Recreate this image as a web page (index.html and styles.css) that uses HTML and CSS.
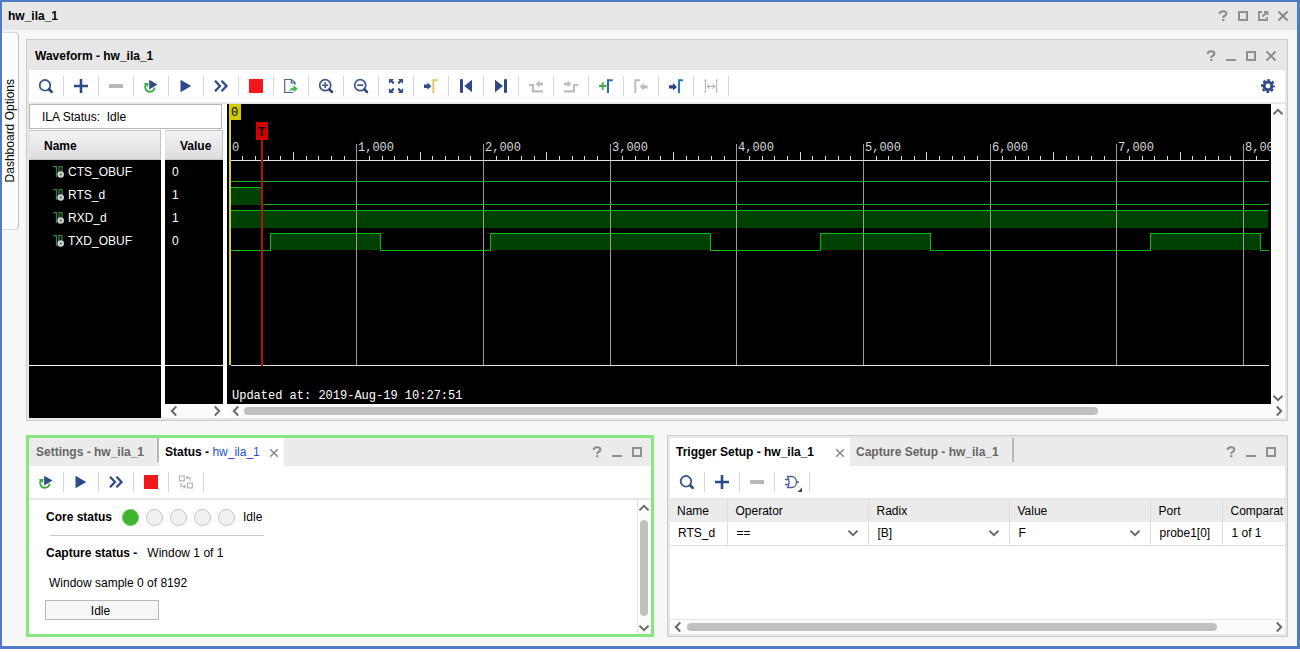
FILE: index.html
```html
<!DOCTYPE html>
<html lang="en">
<head>
<meta charset="utf-8">
<title>hw_ila_1</title>
<link rel="stylesheet" href="styles.css">
</head>
<body>
<svg class="sprite" aria-hidden="true">
  <symbol id="search" viewBox="0 0 16 16"><circle cx="7" cy="7.3" r="5.3" fill="none" stroke="#3f5a8e" stroke-width="1.9"/><path d="M11.3 11.5l2.4 2.4" stroke="#2f4779" stroke-width="2.6" stroke-linecap="round"/></symbol>
  <symbol id="plus" viewBox="0 0 16 16"><path d="M8 1v14M1 8h14" stroke="#2d4a86" stroke-width="2.6"/></symbol>
  <symbol id="minus" viewBox="0 0 16 16"><path d="M1 8h14" stroke="#b8b8b8" stroke-width="4"/></symbol>
  <symbol id="rerun" viewBox="0 0 16 16"><path d="M6.200 1.800L14.500 6.500 6.200 11.400z" fill="#304a84"/><path d="M2.600 6C1.200 9.800 3 13.700 6.600 13.700c2.800 0 4.800-1.700 4.800-4.200" fill="none" stroke="#3fae49" stroke-width="1.900"/><path d="M.8 5.300l4.800-.6-.6 4.600z" fill="#3fae49"/></symbol>
  <symbol id="play" viewBox="0 0 16 16"><path d="M2.500 1.700L13.300 8 2.500 14.300z" fill="#2d4a8c"/></symbol>
  <symbol id="forward" viewBox="0 0 16 16"><path d="M2 2.700L7 8l-5 5.300M8.500 2.700l5 5.300-5 5.300" fill="none" stroke="#2f4a88" stroke-width="2.300"/></symbol>
  <symbol id="stop" viewBox="0 0 16 16"><path d="M1 1h14v14H1z" fill="#f0181c"/></symbol>
  <symbol id="help" viewBox="0 0 12 12"><path d="M2.600 3.900C2.700 2.100 4.200 1.300 6 1.300s3.400.9 3.400 2.400C9.400 5.600 6.200 5.700 6.200 8" fill="none" stroke="#8a8a8a" stroke-width="2"/><path d="M5.100 9.100h2.200v2H5.100z" fill="#8a8a8a"/></symbol>
  <symbol id="minimize" viewBox="0 0 12 12"><path d="M1 10h10" stroke="#909090" stroke-width="2"/></symbol>
  <symbol id="maximize" viewBox="0 0 12 12"><path d="M2 2h8v8H2z" fill="none" stroke="#909090" stroke-width="2"/></symbol>
  <symbol id="popout" viewBox="0 0 12 12"><path d="M5 2H2v8h8V7M5.500 6.500L10 2M7 1.800h3.500v3.300" fill="none" stroke="#8f8f8f" stroke-width="1.800"/></symbol>
  <symbol id="close" viewBox="0 0 12 12"><path d="M1.500 1.500l9 9M10.500 1.500l-9 9" stroke="#888" stroke-width="1.800"/></symbol>
  <symbol id="up" viewBox="0 0 12 12"><path d="M1.500 8.200L6 3.800l4.500 4.400" fill="none" stroke="#6c6c6c" stroke-width="2"/></symbol>
  <symbol id="down" viewBox="0 0 12 12"><path d="M1.500 3.800L6 8.200l4.500-4.400" fill="none" stroke="#6c6c6c" stroke-width="2"/></symbol>
  <symbol id="left" viewBox="0 0 12 12"><path d="M8.200 1.500L3.800 6l4.400 4.500" fill="none" stroke="#6c6c6c" stroke-width="2"/></symbol>
  <symbol id="right" viewBox="0 0 12 12"><path d="M3.800 1.500L8.200 6l-4.400 4.500" fill="none" stroke="#6c6c6c" stroke-width="2"/></symbol>
  <symbol id="signal" viewBox="0 0 12 14"><path d="M0 1.700h3.500V12M6 8V1.700h3V7" fill="none" stroke="#348049" stroke-width="1.300"/><circle cx="7.700" cy="9.500" r="3.300" fill="#c9cfca"/><circle cx="7.700" cy="9.500" r="1" fill="#4d6553"/></symbol>
</svg>

<div class="app">
  <header class="bar titlebar">
    <h1 class="title">hw_ila_1</h1>
    <div class="controls">
      <button aria-label="Help"><svg><use href="#help"/></svg></button>
      <button aria-label="Maximize"><svg><use href="#maximize"/></svg></button>
      <button aria-label="Float"><svg><use href="#popout"/></svg></button>
      <button aria-label="Close"><svg><use href="#close"/></svg></button>
    </div>
  </header>

  <div class="body">
    <aside class="side"><button class="side-tab">Dashboard Options</button></aside>
    <main class="main">

      <section class="panel">
        <header class="bar">
          <h2 class="title">Waveform - hw_ila_1</h2>
          <div class="controls">
            <button aria-label="Help"><svg><use href="#help"/></svg></button>
            <button aria-label="Minimize"><svg><use href="#minimize"/></svg></button>
            <button aria-label="Maximize"><svg><use href="#maximize"/></svg></button>
            <button aria-label="Close"><svg><use href="#close"/></svg></button>
          </div>
        </header>
        <div class="toolbar">
          <button aria-label="Search"><svg><use href="#search"/></svg></button>
          <button aria-label="Add"><svg><use href="#plus"/></svg></button>
          <button aria-label="Remove" disabled><svg><use href="#minus"/></svg></button>
          <button aria-label="Auto re-trigger"><svg><use href="#rerun"/></svg></button>
          <button aria-label="Run trigger"><svg><use href="#play"/></svg></button>
          <button aria-label="Run immediate"><svg><use href="#forward"/></svg></button>
          <button aria-label="Stop"><svg><use href="#stop"/></svg></button>
          <button aria-label="Export data"><svg viewBox="0 0 16 16"><path d="M12 7V4.500L8.500 1.500H1.700v13H10M8.300 1.500v3.300H12" fill="none" stroke="#48679a" stroke-width="1.200"/><path d="M6.500 14.500c0-3.500 1.500-5 4-5V7.300l4.500 3.500-4.500 3.500v-2.300c-2 0-3.200.7-4 2.500z" fill="#4fb559"/></svg></button>
          <button aria-label="Zoom in"><svg viewBox="0 0 16 16"><circle cx="7.200" cy="7.200" r="5.500" fill="none" stroke="#405a8d" stroke-width="1.700"/><path d="M4.200 7.200h6M7.200 4.200v6" stroke="#405a8d" stroke-width="1.600"/><path d="M11.500 11.500l2.500 2.500" stroke="#2f4779" stroke-width="2.500" stroke-linecap="round"/></svg></button>
          <button aria-label="Zoom out"><svg viewBox="0 0 16 16"><circle cx="7.200" cy="7.200" r="5.500" fill="none" stroke="#405a8d" stroke-width="1.700"/><path d="M4.200 7.200h6" stroke="#405a8d" stroke-width="1.800"/><path d="M11.500 11.500l2.500 2.500" stroke="#2f4779" stroke-width="2.500" stroke-linecap="round"/></svg></button>
          <button aria-label="Zoom fit"><svg viewBox="0 0 16 16"><path d="M1 1h5L4.500 2.600 6.500 4.600 5 6.200 2.800 4 1 5.800zM15 1v4.800L13.200 4 11 6.200 9.500 4.600l2-2L10 1zM1 15v-4.800L2.800 12 5 9.800l1.500 1.600-2 2L6 15zM15 15h-5l1.500-1.600-2-2L11 9.800l2.200 2.200 1.800-1.800z" fill="#354f86"/></svg></button>
          <button aria-label="Go to trigger"><svg viewBox="0 0 16 16"><path d="M1 6.500h3.500V4.600L8.300 8.200 4.500 11.700V9.900H1z" fill="#2f4a84"/><path d="M10.300 15V2.200h4.500" fill="none" stroke="#e8c660" stroke-width="1.900"/></svg></button>
          <button aria-label="Go to start"><svg viewBox="0 0 16 16"><path d="M2 1.300h3v13.400H2zM14 1.800v12.400L6.300 8z" fill="#2d4787"/></svg></button>
          <button aria-label="Go to end"><svg viewBox="0 0 16 16"><path d="M11 1.300h3v13.400h-3zM2 1.800v12.400L10 8z" fill="#2d4787"/></svg></button>
          <button aria-label="Previous transition" disabled><svg viewBox="0 0 16 16"><path d="M1 7h4v6.300h10" fill="none" stroke="#bdbdbd" stroke-width="2.200"/><path d="M15 4.500h-3.500V2.300L7.500 6l4 3.500V7.500H15z" fill="#bdbdbd"/></svg></button>
          <button aria-label="Next transition" disabled><svg viewBox="0 0 16 16"><path d="M1 13.300h10V7h4" fill="none" stroke="#bdbdbd" stroke-width="2.200"/><path d="M1 4.500h3.500V2.300l4 3.700-4 3.500V7.500H1z" fill="#bdbdbd"/></svg></button>
          <button aria-label="Add marker"><svg viewBox="0 0 16 16"><path d="M4.700 4.300v7.400M1 8h7.400" stroke="#4aa84a" stroke-width="2"/><path d="M10 15V2.200h4.700" fill="none" stroke="#2b6ca8" stroke-width="2"/></svg></button>
          <button aria-label="Previous marker" disabled><svg viewBox="0 0 16 16"><path d="M2.300 15V2.200H7" fill="none" stroke="#bcbcbc" stroke-width="1.900"/><path d="M14.500 7.200H11V5L6.700 8.800l4.300 3.800v-2.200h3.500z" fill="#bcbcbc"/></svg></button>
          <button aria-label="Next marker"><svg viewBox="0 0 16 16"><path d="M11 15V2.200h4" fill="none" stroke="#247cb7" stroke-width="2"/><path d="M1 7.200h4V5l4 3.900-4 3.700v-2.200H1z" fill="#2f4380"/></svg></button>
          <button aria-label="Swap cursors" disabled><svg viewBox="0 0 16 16"><path d="M1 2.200h1.500v11.600H1M15 2.200h-1.500v11.600H15" fill="none" stroke="#bcbcbc" stroke-width="1.300"/><path d="M4.500 8.500h7M6.500 6.300L4.200 8.500l2.300 2.200M9.500 6.300l2.300 2.200-2.300 2.200" fill="none" stroke="#b5b5b5" stroke-width="1.100"/></svg></button>
          <button class="settings" aria-label="Settings"><svg viewBox="0 0 16 16"><circle cx="8" cy="8" r="3.900" fill="none" stroke="#334c84" stroke-width="3"/><circle cx="8" cy="8" r="6" fill="none" stroke="#334c84" stroke-width="2" stroke-dasharray="2.700 2.012" stroke-dashoffset="1.350"/></svg></button>
        </div>

        <div class="wave-body">
          <div class="signals">
            <p class="ila-status">ILA Status:&nbsp; Idle</p>
            <div class="signal-cols">
              <div class="signal-col names">
                <h3>Name</h3>
                <ul>
                  <li><svg><use href="#signal"/></svg>CTS_OBUF</li>
                  <li><svg><use href="#signal"/></svg>RTS_d</li>
                  <li><svg><use href="#signal"/></svg>RXD_d</li>
                  <li><svg><use href="#signal"/></svg>TXD_OBUF</li>
                </ul>
                <div class="foot"></div>
              </div>
              <div class="signal-col values">
                <h3>Value</h3>
                <ul><li>0</li><li>1</li><li>1</li><li>0</li></ul>
                <div class="foot"></div>
                <div class="hscroll">
                  <button aria-label="Scroll left"><svg><use href="#left"/></svg></button>
                  <div class="track"></div>
                  <button aria-label="Scroll right"><svg><use href="#right"/></svg></button>
                </div>
              </div>
            </div>
          </div>

          <div class="plot-area">
            <div class="plot-row">
              <svg class="plot" role="img" aria-label="Waveform">
                <g transform="translate(-227 -104)" shape-rendering="crispEdges">
                  <path d="M231 187h31v18h-31zM231 210h1037v18H231zM270 233h110v17H270zM490 233h220v17H490zM820 233h110v17H820zM1150 233h110v17h-110z" fill="#004000"/>
                  <path d="M356.500 144v221M483.500 144v221M610.500 144v221M736.500 144v221M863.500 144v221M990.500 144v221M1116.500 144v221M1243.500 144v221" stroke="#9c9c9c"/>
                  <path d="M231 160.500h1038M231 365.500h1038" stroke="#e0e0e0"/>
                  <path stroke="#d8d8d8" d="M293.500 152v8M420.500 152v8M546.500 152v8M673.500 152v8M800.500 152v8M926.500 152v8M1053.500 152v8M1180.500 152v8M242.500 156v4M255.500 156v4M268.500 156v4M280.500 156v4M306.500 156v4M318.500 156v4M331.500 156v4M344.500 156v4M369.500 156v4M382.500 156v4M394.500 156v4M407.500 156v4M432.500 156v4M445.500 156v4M458.500 156v4M470.500 156v4M496.500 156v4M508.500 156v4M521.500 156v4M534.500 156v4M559.500 156v4M572.500 156v4M584.500 156v4M597.500 156v4M622.500 156v4M635.500 156v4M648.500 156v4M660.500 156v4M686.500 156v4M698.500 156v4M711.500 156v4M724.500 156v4M749.500 156v4M762.500 156v4M774.500 156v4M787.500 156v4M812.500 156v4M825.500 156v4M838.500 156v4M850.500 156v4M876.500 156v4M888.500 156v4M901.500 156v4M914.500 156v4M939.500 156v4M952.500 156v4M964.500 156v4M977.500 156v4M1002.500 156v4M1015.500 156v4M1028.500 156v4M1040.500 156v4M1066.500 156v4M1078.500 156v4M1091.500 156v4M1104.500 156v4M1129.500 156v4M1142.500 156v4M1154.500 156v4M1167.500 156v4M1192.500 156v4M1205.500 156v4M1218.500 156v4M1230.500 156v4M1256.500 156v4"/>
                  <path d="M231 181.500h1038M262 204.500h1007" fill="none" stroke="#1ca81c"/>
                  <path d="M231 187.500h31M231 210.500h1037M231 250.500h39.500v-17h110v17h110v-17h220v17h110v-17h110v17h220v-17h110v17h8" fill="none" stroke="#08b808"/>
                  <path d="M230 104v261" stroke="#d0d020" stroke-width="2"/>
                  <path d="M230 104h11v16h-11z" fill="#cccc00"/>
                  <path d="M262 140v226" stroke="#b01212" stroke-width="2"/>
                  <path d="M256 122h12v18h-12z" fill="#d40000"/>
                </g>
                <g class="plot-text">
                  <text x="4" y="12" class="dark">0</text>
                  <text x="31" y="32" class="dark trig">T</text>
                  <text x="5" y="47">0</text><text x="131" y="47">1,000</text><text x="258" y="47">2,000</text><text x="385" y="47">3,000</text><text x="511" y="47">4,000</text><text x="638" y="47">5,000</text><text x="765" y="47">6,000</text><text x="891" y="47">7,000</text><text x="1018" y="47">8,000</text>
                  <text x="5" y="295" class="bright">Updated at: 2019-Aug-19 10:27:51</text>
                </g>
              </svg>
              <div class="vscroll">
                <button aria-label="Scroll up"><svg><use href="#up"/></svg></button>
                <div class="track"></div>
                <button aria-label="Scroll down"><svg><use href="#down"/></svg></button>
              </div>
            </div>
            <div class="hscroll">
              <button aria-label="Scroll left"><svg><use href="#left"/></svg></button>
              <div class="track"><div class="thumb" style="width:83%"></div></div>
              <button aria-label="Scroll right"><svg><use href="#right"/></svg></button>
            </div>
          </div>
        </div>
      </section>

      <div class="bottom">
        <section class="panel status active">
          <header class="bar tabs">
            <button class="tab divided first">Settings - hw_ila_1</button>
            <button class="tab selected">Status - <span class="link">hw_ila_1</span></button>
            <button class="tab-close" aria-label="Close tab"><svg><use href="#close"/></svg></button>
            <div class="controls">
              <button aria-label="Help"><svg><use href="#help"/></svg></button>
              <button aria-label="Minimize"><svg><use href="#minimize"/></svg></button>
              <button aria-label="Maximize"><svg><use href="#maximize"/></svg></button>
            </div>
          </header>
          <div class="toolbar">
            <button aria-label="Auto re-trigger"><svg><use href="#rerun"/></svg></button>
            <button aria-label="Run trigger"><svg><use href="#play"/></svg></button>
            <button aria-label="Run immediate"><svg><use href="#forward"/></svg></button>
            <button aria-label="Stop"><svg><use href="#stop"/></svg></button>
            <button aria-label="Swap layout" disabled><svg viewBox="0 0 16 16"><path d="M1.500 2h4.800v4.800H1.500zM9.500 9h4.800v4.800H9.500zM12 7V3.500H8.500M10 1.800L8.300 3.500 10 5.200M3 9v3.500h4M5.500 10.700l1.800 1.800-1.800 1.800" fill="none" stroke="#b5b5b5" stroke-width="1.200"/></svg></button>
          </div>
          <div class="status-body">
            <div class="status-content">
              <div class="core">
                <b>Core status</b>
                <span class="lights"><i class="on"></i><i></i><i></i><i></i><i></i></span>
                <span>Idle</span>
              </div>
              <p class="capture"><b>Capture status -</b><span>Window 1 of 1</span></p>
              <p class="sample">Window sample 0 of 8192</p>
              <div class="progress">Idle</div>
            </div>
            <div class="vscroll">
              <button aria-label="Scroll up"><svg><use href="#up"/></svg></button>
              <div class="track"><div class="thumb" style="height:91%"></div></div>
              <button aria-label="Scroll down"><svg><use href="#down"/></svg></button>
            </div>
          </div>
        </section>

        <section class="panel trigger">
          <header class="bar tabs">
            <button class="tab selected wide">Trigger Setup - hw_ila_1</button>
            <button class="tab-close" aria-label="Close tab"><svg><use href="#close"/></svg></button>
            <button class="tab divided">Capture Setup - hw_ila_1</button>
            <div class="controls">
              <button aria-label="Help"><svg><use href="#help"/></svg></button>
              <button aria-label="Minimize"><svg><use href="#minimize"/></svg></button>
              <button aria-label="Maximize"><svg><use href="#maximize"/></svg></button>
            </div>
          </header>
          <div class="toolbar">
            <button aria-label="Search"><svg><use href="#search"/></svg></button>
            <button aria-label="Add"><svg><use href="#plus"/></svg></button>
            <button aria-label="Remove" disabled><svg><use href="#minus"/></svg></button>
            <button aria-label="Trigger condition"><svg class="gate" viewBox="0 0 20 20"><path d="M5.500 4.500h4c3 0 5 2.500 5 5.500s-2 5.500-5 5.500h-4c2-3.500 2-7.500 0-11zM3 7.500h3.500M3 12.500h3.500M14.500 10H17" fill="none" stroke="#48608f" stroke-width="1.300"/><path d="M20 15.500V20h-4.500z" fill="#444"/></svg></button>
          </div>
          <div class="table-wrap">
            <table>
              <colgroup><col class="c-name"><col class="c-wide"><col class="c-wide"><col class="c-wide"><col class="c-port"><col></colgroup>
              <thead><tr><th>Name</th><th>Operator</th><th>Radix</th><th>Value</th><th>Port</th><th>Comparat</th></tr></thead>
              <tbody><tr>
                <td>RTS_d</td>
                <td><div class="pick"><select aria-label="Operator"><option>==</option></select><svg><use href="#down"/></svg></div></td>
                <td><div class="pick"><select aria-label="Radix"><option>[B]</option></select><svg><use href="#down"/></svg></div></td>
                <td><div class="pick"><select aria-label="Value"><option>F</option></select><svg><use href="#down"/></svg></div></td>
                <td>probe1[0]</td>
                <td>1 of 1</td>
              </tr></tbody>
            </table>
          </div>
          <div class="hscroll">
            <button aria-label="Scroll left"><svg><use href="#left"/></svg></button>
            <div class="track"><div class="thumb" style="width:90.5%"></div></div>
            <button aria-label="Scroll right"><svg><use href="#right"/></svg></button>
          </div>
        </section>
      </div>
    </main>
  </div>
</div>
</body>
</html>
```

FILE: styles.css
```css
* { box-sizing: border-box; }

body {
  margin: 0;
  padding-bottom: 3px;
  min-height: 100vh;
  display: flex;
  flex-direction: column;
  background: #fff;
  color: #000;
  font: 12px/16px "Liberation Sans", Arial, sans-serif;
}

h1, h2, h3, p, ul { margin: 0; padding: 0; font-size: inherit; }
ul { list-style: none; }
button, select { font: inherit; color: inherit; border: 0; padding: 0; background: none; }
svg { display: block; flex: none; }
.sprite { position: absolute; width: 0; height: 0; }

.app {
  flex: 1;
  display: flex;
  flex-direction: column;
  border: 3px solid #4f7ac6;
  border-width: 2px 3px 3px 2px;
  background: #f7f7f7;
}

/* Title bars */
.bar {
  display: flex;
  align-items: center;
  height: 28px;
  flex: none;
  padding: 0 4px 0 6px;
  background: #e7e7e7;
}
.title { font-weight: bold; }
.controls { display: flex; margin-left: auto; }
.controls button { width: 20px; height: 20px; display: grid; place-items: center; }
.controls svg, .hscroll svg, .vscroll svg, .pick svg { width: 12px; height: 12px; }
li svg { width: 12px; height: 14px; }

.body { flex: 1; display: flex; }
.side { width: 24px; flex: none; padding-top: 1px; }
.side-tab {
  width: 17px;
  padding: 47px 0;
  writing-mode: vertical-rl;
  transform: rotate(180deg);
  background: #fff;
  border: 1px solid #bdbdbd;
  border-right: 0;
  border-radius: 5px 0 0 5px;
}
.main {
  flex: 1;
  min-width: 0;
  display: flex;
  flex-direction: column;
  gap: 14px;
  padding: 9px 9px 9px 0;
}

.panel {
  display: flex;
  flex-direction: column;
  min-width: 0;
  border: 1px solid #ccc;
  padding: 2px;
  background: #e7e7e7;
}

/* Toolbars */
.toolbar {
  display: flex;
  align-items: center;
  height: 32px;
  flex: none;
  background: #fff;
}
.toolbar button {
  width: 35px;
  height: 20px;
  border-right: 1px solid #d8d8d8;
  display: grid;
  place-items: center;
}
.toolbar svg { width: 16px; height: 16px; }
.toolbar .gate { width: 20px; height: 20px; }
.toolbar .settings { margin-left: auto; border: 0; }

/* Scroll bars */
.hscroll, .vscroll { display: flex; align-items: center; background: #fcfcfc; flex: none; }
.hscroll { height: 14px; }
.hscroll button { width: 17px; display: grid; place-items: center; }
.hscroll button:last-child { width: 12px; }
.vscroll { width: 14px; flex-direction: column; }
.vscroll button { height: 16px; display: grid; place-items: center; }
.vscroll button:last-child { height: 12px; }
.track { flex: 1; min-width: 0; }
.thumb { border-radius: 4px; background: #c0c0c0; }
.hscroll .thumb { height: 8px; }
.vscroll .thumb { width: 8px; margin: 4px auto 0; }

/* Waveform */
.wave-body { display: flex; gap: 4px; margin-top: 2px; background: #fff; }
.signals { width: 194px; flex: none; display: flex; flex-direction: column; gap: 1px; }
.ila-status {
  height: 25px;
  padding: 4px 12px 0;
  margin-right: 1px;
  border: 1px solid #b5b5b5;
}
.signal-cols { flex: 1; display: flex; gap: 4px; }
.signal-col { display: flex; flex-direction: column; background: #000; color: #fff; }
.names { flex: 1; }
.values { width: 58px; }
.signal-col h3 {
  height: 30px;
  padding: 7px 14px 0;
  color: #000;
  background: linear-gradient(#f3f3f3, #dddde1);
  border: 1px solid #c4c4c4;
  border-left-color: #e4e4e4;
}
.signal-col ul { flex: 1; border-bottom: 1px solid #fff; }
.signal-col li { display: flex; align-items: center; gap: 3px; height: 23px; padding-left: 24px; }
.values li { padding-left: 7px; }
.foot { height: 52px; }
.values .foot { height: 38px; }

.plot-area { flex: 1; min-width: 0; display: flex; flex-direction: column; }
.plot-row { display: flex; }
.plot { flex: 1; min-width: 0; height: 300px; background: #000; }
.plot-text { font: 12px "Liberation Mono", "Courier New", monospace; fill: #d8d8d8; }
.plot-text .dark { fill: #000; }
.plot-text .trig { font-weight: bold; }
.plot-text .bright { fill: #fff; }

/* Lower panels */
.bottom { flex: 1; display: flex; gap: 13px; }
.status { flex: 628 1 0; }
.trigger { flex: 621 1 0; }
.active { border: 3px solid #86e680; padding: 0; }
.tabs { padding-left: 0; background: #ebebeb; align-items: stretch; }
.tabs .controls { align-items: center; }
.tab { color: #666; font-weight: bold; padding: 0 6px; white-space: nowrap; }
.tab.divided {
  padding-right: 15px;
  background: linear-gradient(#b8b8b8, #b8b8b8) right top / 2px 24px no-repeat;
}
.tab.first { padding-left: 7px; }
.tab.selected { color: #000; background: #fff; padding-right: 4px; }
.tab.selected.wide { padding-right: 16px; }
.link { color: #1f4fd0; font-weight: normal; }
.tab-close { width: 20px; background: #fff; padding: 2px 0 0 5px; }
.tab-close svg { width: 10px; height: 10px; }

.status-body { flex: 1; display: flex; border-top: 2px solid #e7e7e7; background: #fff; }
.status-content { flex: 1; padding: 8px 16px; }
.status-body .vscroll { border-left: 1px solid #e7e7e7; }
.core { display: flex; align-items: center; gap: 8px; height: 18px; padding-left: 1px; }
.lights { display: flex; gap: 7px; padding-left: 2px; }
.lights i { width: 17px; height: 17px; border: 1px solid #c6c6c6; border-radius: 50%; background: #f0f0f0; }
.lights .on { background: #3db52c; border-color: #6cc460; }
.capture { width: 219px; margin-top: 9px; padding: 10px 0 0 1px; display: flex; gap: 10px; position: relative; }
.capture::before { content: ""; position: absolute; inset: 0 0 auto 5px; border-top: 1px solid #c8c8c8; }
.sample { margin: 14px 0 0 4px; }
.progress {
  width: 114px;
  height: 20px;
  margin-top: 9px;
  padding: 2px 3px 0 0;
  text-align: center;
  background: #f6f6f6;
  border: 1px solid #b8b8b8;
}

.table-wrap { flex: 1; overflow: hidden; background: #fff; border-top: 2px solid #e7e7e7; border-bottom: 1px solid #e7e7e7; }
table { width: 100%; min-width: 610px; table-layout: fixed; border-collapse: collapse; }
.c-name { width: 58px; }
.c-wide { width: 141px; }
.c-port { width: 72px; }
th, td {
  padding: 0 0 0 7px;
  text-align: left;
  font-weight: normal;
  white-space: nowrap;
  overflow: hidden;
  border-right: 1px solid #dedede;
}
th:last-child, td:last-child { border-right: 0; }
th { height: 22px; background: #ebebeb; }
td { height: 23px; padding-left: 8px; border-bottom: 1px solid #dedede; }
.pick { display: flex; align-items: center; }
.pick select { flex: 1; appearance: none; min-width: 0; margin-right: -20px; }
.pick svg { margin-right: 9px; pointer-events: none; }
```
